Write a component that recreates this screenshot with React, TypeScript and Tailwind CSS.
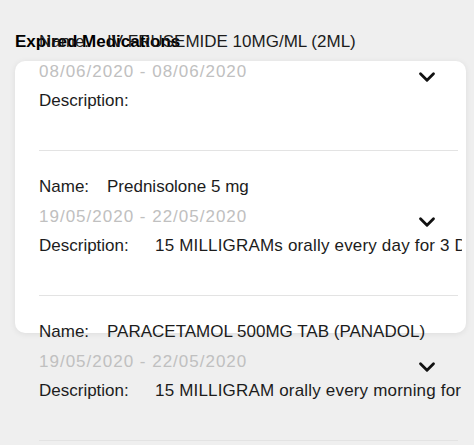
import { ChevronDown } from "lucide-react";

interface Medication {
  name: string;
  dates: string;
  description: string;
}

const meds: Medication[] = [
  { name: "IV FRUSEMIDE 10MG/ML (2ML)", dates: "08/06/2020 - 08/06/2020", description: "" },
  { name: "Prednisolone 5 mg", dates: "19/05/2020 - 22/05/2020", description: "15 MILLIGRAMs orally every day for 3 Days" },
  { name: "PARACETAMOL 500MG TAB (PANADOL)", dates: "19/05/2020 - 22/05/2020", description: "15 MILLIGRAM orally every morning for" },
];

function MedicationRow({ med }: { med: Medication }) {
  return (
    <div className="pl-[24px] pr-[8px] pb-[24px]">
      <div className="flex h-[24px] items-center text-[17px] text-[#1c1c1c] whitespace-nowrap">
        <span className="w-[68px]">Name:</span>
        <span>{med.name}</span>
      </div>
      <div className="mt-[6px] flex h-[24px] items-start justify-between">
        <span className="leading-[24px] text-[17px] tracking-[1px] text-[#c0c0c0]">{med.dates}</span>
        <ChevronDown className="mt-[4px] mr-[17px] h-[26px] w-[28px] text-[#111]" strokeWidth={2.6} />
      </div>
      <div className="mt-[5px] mr-[-4px] flex h-[24px] items-center overflow-hidden whitespace-nowrap text-[17px] text-[#1c1c1c]">
        <span className="w-[116px] shrink-0">Description:</span>
        <span className="tracking-[0.18px]">{med.description}</span>
      </div>
      <div className="mt-[37px] h-px bg-[#e3e3e3]" />
    </div>
  );
}

export default function App() {
  return (
    <div
      className="h-[445px] overflow-hidden bg-[#efefef] px-[15px] pt-[30px] pr-[8px]"
      style={{ fontFamily: '"Liberation Sans", Arial, sans-serif' }}
    >
      <h2 className="h-[24px] leading-[24px] text-[17px] font-bold text-black">Expired Medications</h2>
      <div className="mt-[7px] flex h-[272px] flex-col rounded-[10px] bg-white shadow-[0_1px_6px_rgba(0,0,0,0.08)]">
        <div className="-mt-[31px]">
          {meds.map((m) => (
            <MedicationRow key={m.name} med={m} />
          ))}
        </div>
      </div>
    </div>
  );
}
